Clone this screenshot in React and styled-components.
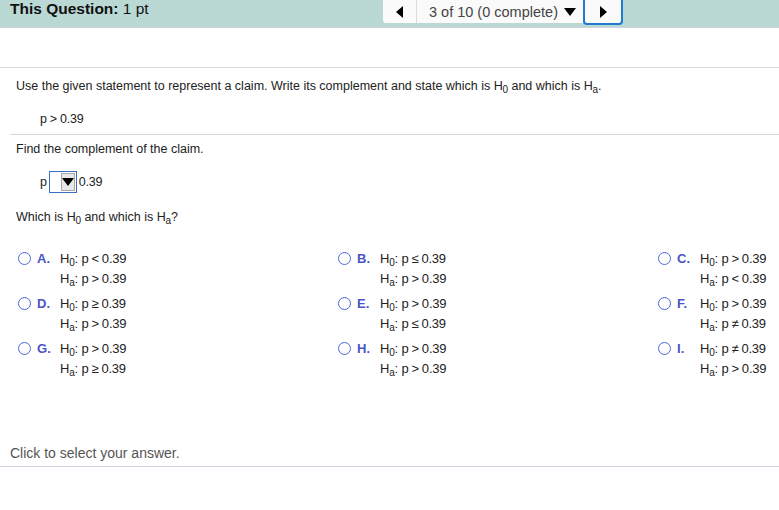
import styled, { createGlobalStyle } from "styled-components";

const Global = createGlobalStyle`
  body { margin: 0; background: #fff; font-family: "Liberation Sans", Arial, sans-serif; color: #222; }
`;

const Header = styled.div`
  height: 27px;
  background: #bad9d5;
  border-bottom: 1px solid #ccd3dc;
  display: grid;
  grid-template-columns: 373px auto 1fr;
  padding-left: 10px;
`;

const Title = styled.div`
  font-size: 15.5px;
  line-height: 17px;
  color: #111;
  b { font-weight: 700; }
`;

const Nav = styled.div`
  display: flex;
  height: 23px;
  align-self: start;
`;

const NavBtn = styled.div`
  width: 33px;
  height: 23px;
  background: #fafafa;
  border-right: 1px solid #dcdcdc;
  border-bottom-left-radius: 3px;
  display: flex;
  align-items: center;
  justify-content: center;
`;

const NavLabel = styled.div`
  width: 166px;
  height: 23px;
  background: #fafafa;
  font-size: 14.5px;
  color: #444;
  display: flex;
  align-items: center;
  padding-left: 12px;
  gap: 6px;
  box-sizing: border-box;
`;

const NextBtn = styled.div`
  width: 40px;
  height: 25px;
  box-sizing: border-box;
  background: #fafafa;
  border: 2px solid #1f7ad1;
  border-top: none;
  border-radius: 0 0 4px 4px;
  display: flex;
  align-items: center;
  justify-content: center;
`;

const Tri = ({ dir }) => {
  const pts = { left: "8,0 8,12 1,6", right: "1,0 1,12 8,6", down: "0,1 12,1 6,9" }[dir];
  const w = dir === "down" ? 12 : 9;
  const h = dir === "down" ? 10 : 12;
  return (
    <svg width={w} height={h} viewBox={`0 0 ${w} ${h}`}>
      <polygon points={pts} fill="#000" />
    </svg>
  );
};

const Question = styled.div`
  margin-top: 39px;
  border-top: 1px solid #d3d7de;
`;

const Para = styled.div`
  font-size: 12.5px;
  line-height: 17px;
  padding-left: ${(p) => p.$indent || 16}px;
  margin-top: ${(p) => p.$top || 0}px;
  color: #222;
`;

const Divider = styled.div`
  margin: ${(p) => p.$top}px 0 0 10px;
  border-top: 1px solid #d3d7de;
`;

const Math = styled.span`
  font-size: ${(p) => p.$size || 12.5}px;
  letter-spacing: -0.2px;
  sub { font-size: 10px; vertical-align: -3px; line-height: 0; }
`;

const Op = styled.span`
  margin: 0 3px;
`;

const SelectRow = styled.div`
  display: flex;
  align-items: center;
  padding-left: 40px;
  margin-top: 13px;
  font-size: 12.5px;
  height: 22px;
`;

const Select = styled.div`
  width: 28px;
  height: 22px;
  box-sizing: border-box;
  border: 1px solid #3b6fc4;
  margin-left: 2px;
  margin-right: 2px;
  display: flex;
  justify-content: flex-end;
  align-items: center;
  padding-right: 1px;
`;

const SelBtn = styled.div`
  width: 14px;
  height: 18px;
  background: #e8e8e8;
  border: 1px solid #a9a9a9;
  box-sizing: border-box;
  display: flex;
  align-items: center;
  justify-content: center;
`;

const Options = styled.div`
  display: grid;
  grid-template-columns: 320px 320px 1fr;
  row-gap: 5px;
  padding-left: 18px;
  margin-top: 23px;
`;

const Option = styled.div`
  display: flex;
  align-items: flex-start;
`;

const Radio = styled.span`
  width: 11px;
  height: 11px;
  border: 1.5px solid #4a6ad8;
  border-radius: 50%;
  margin-top: 3px;
  flex: none;
`;

const Letter = styled.span`
  color: #4b55c4;
  font-size: 13px;
  font-weight: 700;
  width: 23px;
  margin-left: 6px;
  line-height: 20px;
`;

const Lines = styled.div`
  display: flex;
  flex-direction: column;
  line-height: 20px;
`;

const Footer = styled.div`
  margin-top: 65px;
  padding: 0 10px 4px;
  font-size: 14px;
  line-height: 18px;
  color: #555;
  border-bottom: 1px solid #ccd3dc;
`;

const H = ({ s }) => (
  <span>
    H<sub>{s}</sub>:
  </span>
);

const opts = [
  ["A", "<", ">"],
  ["B", "≤", ">"],
  ["C", ">", "<"],
  ["D", "≥", ">"],
  ["E", ">", "≤"],
  ["F", ">", "≠"],
  ["G", ">", "≥"],
  ["H", ">", ">"],
  ["I", "≠", ">"],
];

export default function App() {
  return (
    <>
      <Global />
      <Header>
        <Title>
          <b>This Question:</b> 1 pt
        </Title>
        <Nav>
          <NavBtn>
            <Tri dir="left" />
          </NavBtn>
          <NavLabel>
            3 of 10 (0 complete) <Tri dir="down" />
          </NavLabel>
          <NextBtn>
            <Tri dir="right" />
          </NextBtn>
        </Nav>
      </Header>
      <Question>
        <Para $top={10}>
          Use the given statement to represent a claim. Write its complement and state which is{" "}
          <Math>
            H<sub>0</sub>
          </Math>{" "}
          and which is{" "}
          <Math>
            H<sub>a</sub>
          </Math>
          .
        </Para>
        <Para $indent={40} $top={16}>
          <Math>
            p<Op>{">"}</Op>0.39
          </Math>
        </Para>
        <Divider $top={6} />
        <Para $top={6}>Find the complement of the claim.</Para>
        <SelectRow>
          <Math>p</Math>
          <Select>
            <SelBtn>
              <Tri dir="down" />
            </SelBtn>
          </Select>
          <Math>0.39</Math>
        </SelectRow>
        <Para $top={16}>
          Which is{" "}
          <Math>
            H<sub>0</sub>
          </Math>{" "}
          and which is{" "}
          <Math>
            H<sub>a</sub>
          </Math>
          ?
        </Para>
        <Options>
          {opts.map(([l, a, b]) => (
            <Option key={l}>
              <Radio />
              <Letter>{l}.</Letter>
              <Lines>
                <Math $size={13}>
                  <H s="0" /> p<Op>{a}</Op>0.39
                </Math>
                <Math $size={13}>
                  <H s="a" /> p<Op>{b}</Op>0.39
                </Math>
              </Lines>
            </Option>
          ))}
        </Options>
        <Footer>Click to select your answer.</Footer>
      </Question>
    </>
  );
}
